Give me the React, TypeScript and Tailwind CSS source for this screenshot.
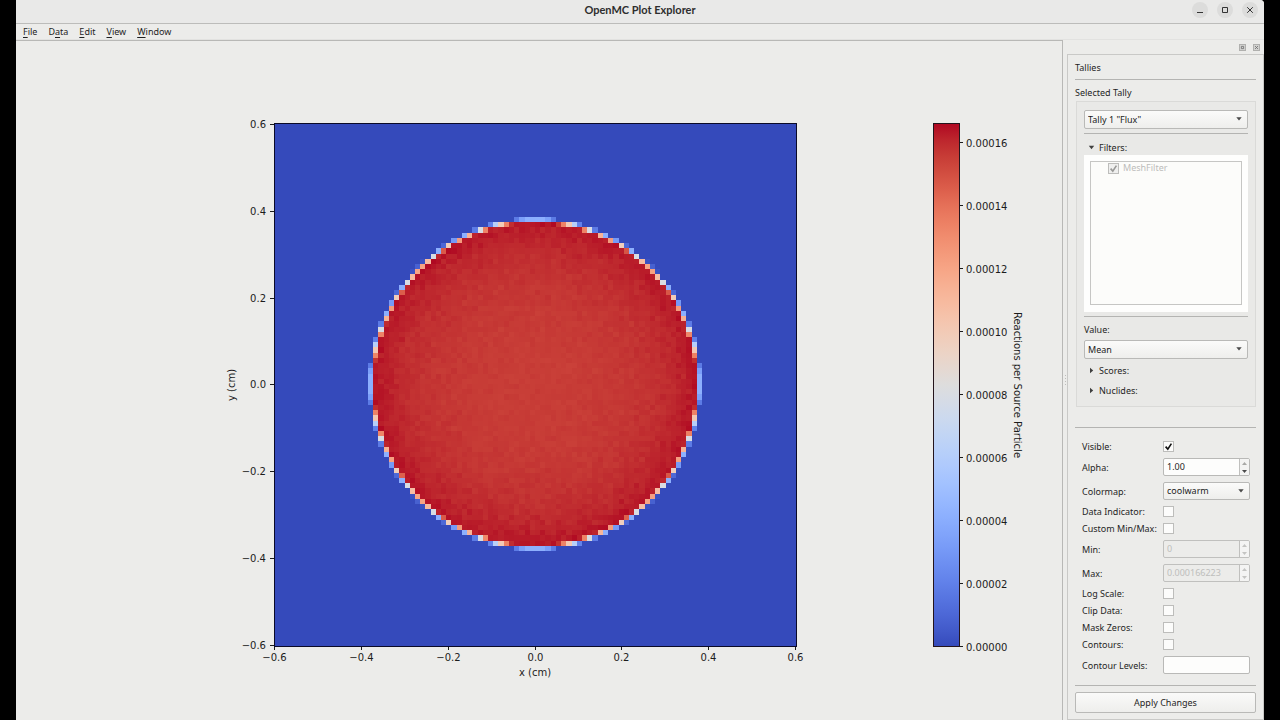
import React, { useId } from "react";

type RGB = [number, number, number];

const COOLWARM: RGB[] = [
  [53, 74, 187], [66, 90, 202], [77, 104, 215], [87, 117, 225], [98, 130, 234],
  [108, 142, 241], [119, 154, 247], [130, 165, 251], [141, 176, 254], [152, 185, 255],
  [163, 194, 255], [174, 201, 253], [184, 208, 249], [194, 213, 244], [204, 217, 238],
  [213, 219, 230], [221, 221, 221], [229, 216, 209], [236, 211, 197], [241, 204, 185],
  [245, 196, 173], [247, 187, 160], [247, 177, 148], [247, 166, 135], [244, 154, 123],
  [241, 141, 111], [236, 127, 99], [229, 112, 88], [220, 94, 75], [209, 77, 64],
  [199, 60, 54], [189, 38, 45], [176, 8, 34],
];

function coolwarm(value: number): string {
  const t = Math.min(1, Math.max(0, value)) * (COOLWARM.length - 1);
  const i = Math.min(COOLWARM.length - 2, Math.floor(t));
  const f = t - i;
  const c = COOLWARM[i].map((a, k) => Math.round(a + (COOLWARM[i + 1][k] - a) * f));
  return `rgb(${c[0]},${c[1]},${c[2]})`;
}

const CELLS = 100;
const FUEL_RADIUS = 31.3;
const SUBSAMPLES = 8;

function coverage(cx: number, cy: number): number {
  let hits = 0;
  for (let i = 0; i < SUBSAMPLES; i++) {
    for (let j = 0; j < SUBSAMPLES; j++) {
      const x = cx + (i + 0.5) / SUBSAMPLES - 0.5;
      const y = cy + (j + 0.5) / SUBSAMPLES - 0.5;
      if (Math.hypot(x, y) < FUEL_RADIUS) hits++;
    }
  }
  return hits / (SUBSAMPLES * SUBSAMPLES);
}

interface Cell {
  col: number;
  row: number;
  color: string;
}

function buildMesh(): Cell[] {
  let seed = 20231;
  const random = () => {
    seed = (seed * 16807) % 2147483647;
    return seed / 2147483647;
  };
  const cells: Cell[] = [];
  for (let row = 0; row < CELLS; row++) {
    for (let col = 0; col < CELLS; col++) {
      const x = col + 0.5 - CELLS / 2;
      const y = row + 0.5 - CELLS / 2;
      const r = Math.hypot(x, y) / FUEL_RADIUS;
      if (r > 1.06) continue;
      const share = coverage(x, y);
      if (share === 0) continue;
      const noise = (random() + random() - 1) * (0.008 + 0.008 * r * r);
      const flux = 0.935 + 0.03 * r * r + 0.025 * Math.pow(r, 6) + noise;
      cells.push({ col, row, color: coolwarm(flux * share) });
    }
  }
  return cells;
}

const MESH = buildMesh();
const PLOT = { x: 258, y: 82, size: 522 };
const CELL = PLOT.size / CELLS;
const AXIS_TICKS = [-0.6, -0.4, -0.2, 0, 0.2, 0.4, 0.6];
const BAR_TICKS = [0, 1, 2, 3, 4, 5, 6, 7, 8];

const tickText = (v: number) => v.toFixed(1).replace("-", "\u2212");

function Figure() {
  return (
    <svg
      viewBox="0 0 1046 679"
      className="block h-full w-full font-['DejaVu_Sans',sans-serif] text-[10px]"
      fill="#1c1c1c"
      role="img"
      aria-label="Flux tally, mean reactions per source particle"
    >
      <defs>
        <linearGradient id="colorbar" x1="0" y1="1" x2="0" y2="0">
          {COOLWARM.map((_, i) => (
            <stop key={i} offset={i / 32} stopColor={coolwarm(i / 32)} />
          ))}
        </linearGradient>
      </defs>

      <rect x={PLOT.x} y={PLOT.y} width={523} height={524} fill={coolwarm(0)} />
      <g shapeRendering="crispEdges">
        {MESH.map((c) => (
          <rect
            key={`${c.col}-${c.row}`}
            x={PLOT.x + c.col * CELL}
            y={PLOT.y + c.row * CELL}
            width={CELL}
            height={CELL}
            fill={c.color}
          />
        ))}
      </g>
      <rect x="258.5" y="82.5" width="522" height="523" fill="none" stroke="#0a0a28" />

      {AXIS_TICKS.map((v) => {
        const offset = Math.round(((v + 0.6) / 1.2) * 521);
        const x = 258.5 + offset;
        const y = 605 - offset;
        return (
          <g key={v}>
            <path d={`M${x} 606v3M254 ${y - 0.5}h4`} stroke="#1c1c1c" fill="none" />
            <text x={x} y="620" textAnchor="middle">{tickText(v)}</text>
            <text x="250" y={y + 3} textAnchor="end">{tickText(v)}</text>
          </g>
        );
      })}
      <text x="519" y="635" textAnchor="middle">x (cm)</text>
      <text transform="translate(219 344) rotate(-90)" textAnchor="middle">y (cm)</text>

      <rect x="917.5" y="82.5" width="26" height="523" fill="url(#colorbar)" stroke="#24141c" />
      {BAR_TICKS.map((n) => {
        const y = 605.5 - n * 63;
        return (
          <g key={n}>
            <path d={`M944 ${y}h3`} stroke="#1c1c1c" />
            <text x="950" y={y + 4}>{(n * 0.00002).toFixed(5)}</text>
          </g>
        );
      })}
      <text transform="translate(998 344) rotate(90)" textAnchor="middle">
        Reactions per Source Particle
      </text>
    </svg>
  );
}

function Menu({ before = "", hot, after }: { before?: string; hot: string; after: string }) {
  return (
    <button type="button" className="leading-4">
      {before}
      <span className="underline underline-offset-2">{hot}</span>
      {after}
    </button>
  );
}

function WindowButton({ label, d }: { label: string; d: string }) {
  return (
    <button type="button" aria-label={label} className="grid size-4 place-items-center rounded-full bg-[#dcdcdb]">
      <svg viewBox="0 0 16 16" className="size-4" fill="none" stroke="#333">
        <path d={d} />
      </svg>
    </button>
  );
}

function DockButton({ label, d }: { label: string; d: string }) {
  return (
    <button type="button" aria-label={label} className="size-[7px] bg-[#d2d2d0]">
      <svg viewBox="0 0 7 7" className="size-[7px]" fill="none" stroke="#6d6d6d">
        <rect x="0.5" y="0.5" width="6" height="6" stroke="#b0b0ae" />
        <path d={d} strokeWidth="0.8" />
      </svg>
    </button>
  );
}

function Rule() {
  return <hr className="border-0 border-t border-[#b4b4b2]" />;
}

function Combo({ id, value, compact = false }: { id: string; value: string; compact?: boolean }) {
  return (
    <div className={compact ? "relative h-[18px]" : "relative h-[19px]"}>
      <select
        id={id}
        className="block h-full w-full appearance-none rounded-xs border border-[#b9b9b7] bg-linear-to-b from-[#fbfbfa] to-[#eeeeec] px-[3px] leading-4 text-[#1b1b1b]"
      >
        <option>{value}</option>
      </select>
      <svg viewBox="0 0 6 4" className="pointer-events-none absolute top-[7px] right-1.5 h-1 w-1.5" fill="#4a4a4a">
        <path d="M0.3 0.3h5.4L3 3.6z" />
      </svg>
    </div>
  );
}

function Disclosure({ label, open = false }: { label: string; open?: boolean }) {
  return (
    <button type="button" aria-expanded={open} className="flex h-[15px] items-center gap-1 pl-1">
      <svg viewBox="0 0 7 7" className="size-[7px]" fill="#3f3f3f">
        <path d={open ? "M0.8 1.8h5.4L3.5 5.2z" : "M2 0.8v5.4L5.2 3.5z"} />
      </svg>
      {label}
    </button>
  );
}

function Tick({ id, checked = false, disabled = false }: { id: string; checked?: boolean; disabled?: boolean }) {
  return (
    <span className="relative block size-[11px]">
      <input
        id={id}
        type="checkbox"
        defaultChecked={checked}
        disabled={disabled}
        className="peer block size-[11px] appearance-none border border-[#bdbdbb] bg-[#fcfcfb] disabled:bg-[#efefee]"
      />
      <svg
        viewBox="0 0 11 11"
        className="pointer-events-none absolute inset-0 hidden size-[11px] text-[#111] peer-checked:block peer-disabled:text-[#999997]"
        fill="none"
        stroke="currentColor"
        strokeWidth="1.6"
      >
        <path d="M2.6 5.6L4.8 8.1L8.4 2.6" />
      </svg>
    </span>
  );
}

function Spin({ id, value, disabled = false }: { id: string; value: string; disabled?: boolean }) {
  const arrow = disabled ? "#c4c4c2" : "#4a4a4a";
  return (
    <div
      className={
        disabled
          ? "flex h-[18px] overflow-hidden rounded-xs border border-[#c0c0be] bg-[#ececea] text-[#bebebc]"
          : "flex h-[18px] overflow-hidden rounded-xs border border-[#b9b9b7] bg-[#fdfdfc]"
      }
    >
      <input id={id} type="text" defaultValue={value} disabled={disabled} className="w-0 min-w-0 flex-1 px-[3px] leading-4" />
      <div className="flex w-2.5 flex-col border-l border-[#c0c0be] bg-[#f4f4f3]">
        <button type="button" disabled={disabled} aria-label="Increase" className="grid flex-1 place-items-center">
          <svg viewBox="0 0 5 3" className="h-[3px] w-[5px]" fill={disabled ? arrow : "#a8a8a6"}>
            <path d="M0 3h5L2.5 0z" />
          </svg>
        </button>
        <button type="button" disabled={disabled} aria-label="Decrease" className="grid flex-1 place-items-center">
          <svg viewBox="0 0 5 3" className="h-[3px] w-[5px]" fill={arrow}>
            <path d="M0 0h5L2.5 3z" />
          </svg>
        </button>
      </div>
    </div>
  );
}

function Row({ label, children }: { label: string; children: (id: string) => React.ReactNode }) {
  const id = useId();
  return (
    <div className="grid grid-cols-[81px_1fr] items-center">
      <label htmlFor={id} className="leading-[11px] whitespace-nowrap">{label}</label>
      {children(id)}
    </div>
  );
}

function TallyBox() {
  return (
    <div className="ml-px flex flex-col border border-[#dadad8] bg-[#e9e9e7] px-[7px] pt-2 pb-2">
      <Combo id="tally" value={'Tally 1 "Flux"'} />
      <div className="pt-1 pb-1.5"><Rule /></div>
      <Disclosure label="Filters:" open />
      <div className="bg-[#fefefd] px-1.5 pt-1.5 pb-[7px]">
        <div className="h-36 border border-[#c6c6c4] bg-[#fcfcfa]">
          <div className="flex items-center gap-1 pl-[17px] text-[#bcbcba]">
            <Tick id="mesh-filter" checked disabled />
            <label htmlFor="mesh-filter" className="leading-3">MeshFilter</label>
          </div>
        </div>
      </div>
      <div className="pt-1 pb-1.5"><Rule /></div>
      <label htmlFor="value" className="pb-[3px] leading-[14px]">Value:</label>
      <Combo id="value" value="Mean" />
      <div className="flex flex-col gap-[5px] pt-1">
        <Disclosure label="Scores:" />
        <Disclosure label="Nuclides:" />
      </div>
    </div>
  );
}

function TallyDock() {
  return (
    <aside className="flex w-[197px] flex-none flex-col">
      <div className="flex h-3.5 items-center justify-end gap-[7px] pr-1">
        <DockButton label="Float" d="M2.4 2.4h2.2v2.2h-2.2z" />
        <DockButton label="Close" d="M2 2l3 3M5 2l-3 3" />
      </div>
      <div className="flex flex-1 flex-col border border-[#c9c9c7] px-[7px] py-1.5">
        <h2 className="pb-1 leading-[14px]">Tallies</h2>
        <Rule />
        <label htmlFor="tally" className="pt-1.5 pb-px leading-[14px]">Selected Tally</label>
        <TallyBox />
        <div className="pt-5 pb-[13px]"><Rule /></div>
        <form className="flex flex-col gap-1.5 pr-1.5 pl-[7px]">
          <Row label="Visible:">{(id) => <Tick id={id} checked />}</Row>
          <Row label="Alpha:">{(id) => <Spin id={id} value="1.00" />}</Row>
          <Row label="Colormap:">{(id) => <Combo id={id} value="coolwarm" compact />}</Row>
          <Row label="Data Indicator:">{(id) => <Tick id={id} />}</Row>
          <Row label="Custom Min/Max:">{(id) => <Tick id={id} />}</Row>
          <Row label="Min:">{(id) => <Spin id={id} value="0" disabled />}</Row>
          <Row label="Max:">{(id) => <Spin id={id} value="0.000166223" disabled />}</Row>
          <Row label="Log Scale:">{(id) => <Tick id={id} />}</Row>
          <Row label="Clip Data:">{(id) => <Tick id={id} />}</Row>
          <Row label="Mask Zeros:">{(id) => <Tick id={id} />}</Row>
          <Row label="Contours:">{(id) => <Tick id={id} />}</Row>
          <Row label="Contour Levels:">
            {(id) => (
              <input id={id} type="text" className="block h-[18px] w-full rounded-xs border border-[#b9b9b7] bg-[#fdfdfc] px-[3px]" />
            )}
          </Row>
        </form>
        <div className="mt-auto pb-1.5"><Rule /></div>
        <button
          type="button"
          className="h-[21px] rounded-xs border border-[#b9b9b7] bg-linear-to-b from-[#fafaf9] to-[#eeeeec]"
        >
          Apply Changes
        </button>
      </div>
    </aside>
  );
}

export default function App() {
  return (
    <div className="flex min-h-screen flex-col bg-black px-4 font-['Noto_Sans',sans-serif] text-[9px] text-[#1f1f1f]">
      <div className="flex flex-1 flex-col rounded-tr-sm bg-[#ececea]">
        <header className="grid h-6 grid-cols-[1fr_auto_1fr] items-start rounded-tr-sm border-b border-[#bcbcba] bg-[#e9e9e8]">
          <h1 className="col-start-2 font-['Lato','Noto_Sans',sans-serif] text-[11px] leading-5 font-bold text-[#2e2e2e]">
            OpenMC Plot Explorer
          </h1>
          <div className="flex justify-end gap-[9px] pt-0.5 pr-1.5">
            <WindowButton label="Minimize" d="M5 10.5h6" />
            <WindowButton label="Maximize" d="M5.5 5.5h5v5h-5z" />
            <WindowButton label="Close" d="M5.2 5.2l5.6 5.6M10.8 5.2l-5.6 5.6" />
          </div>
        </header>
        <nav className="flex h-4 items-center gap-[11px] border-b border-[#e2e2e0] pl-[7px]">
          <Menu hot="F" after="ile" />
          <Menu before="D" hot="a" after="ta" />
          <Menu hot="E" after="dit" />
          <Menu hot="V" after="iew" />
          <Menu hot="W" after="indow" />
        </nav>
        <div className="flex flex-1">
          <main className="min-w-0 flex-1 border-t border-r border-[#b8b8b6]">
            <Figure />
          </main>
          <div className="flex w-1 flex-none flex-col items-center justify-center gap-0.5">
            <span className="size-px bg-[#bdbdbb]" />
            <span className="size-px bg-[#bdbdbb]" />
            <span className="size-px bg-[#bdbdbb]" />
            <span className="size-px bg-[#bdbdbb]" />
          </div>
          <TallyDock />
        </div>
      </div>
    </div>
  );
}
